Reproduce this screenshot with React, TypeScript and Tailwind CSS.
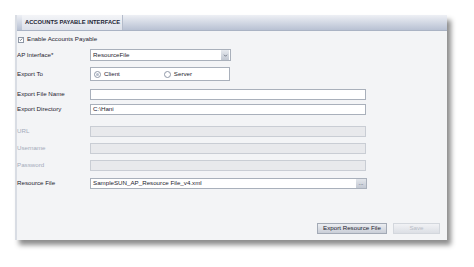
import React from "react";

const field = "h-[11px] border border-[#a9b0bb] bg-white";
const disabledField = "h-[11px] border border-[#c9cdd4] bg-[#e8e9ec]";

function Row({
	label,
	disabled,
	className,
	children,
}: {
	label: string;
	disabled?: boolean;
	className?: string;
	children: React.ReactNode;
}) {
	return (
		<div className={`flex items-center ${className ?? ""}`}>
			<span
				className={`w-[73px] shrink-0 whitespace-nowrap ${disabled ? "text-[#a3abba]" : "text-[#1e2330]"}`}
			>
				{label}
			</span>
			{children}
		</div>
	);
}

export default function App() {
	return (
		<div className="w-[474px] h-[267px] bg-white pt-[15px] pl-[15px] font-['Liberation_Sans',Arial,sans-serif] text-[6.2px] leading-none">
			<div className="w-[432px] h-[225px] bg-[#f3f4f6] border-l-2 border-[#d9dde4] shadow-[4px_5px_5px_rgba(0,0,0,0.45)] flex flex-col">
				{/* Header */}
				<div className="h-[16px] shrink-0 flex bg-gradient-to-b from-[#eef0f5] to-[#b8c1d3] border-b border-[#aab3c4]">
					<div className="ml-[5px] w-[101px] h-full flex items-center pl-[3px] bg-gradient-to-b from-[#f4f5f8] to-[#dde1ea] border-r border-[#b4bccb]">
						<span className="whitespace-nowrap font-bold text-[5.8px] text-[#1b2433]">
							ACCOUNTS PAYABLE INTERFACE
						</span>
					</div>
				</div>

				<div className="flex flex-col">
					{/* Enable */}
					<div className="mt-[4px] h-[9px] flex items-center">
						<div className="ml-[1px] w-[6px] h-[6px] border border-[#8e97a6] bg-white flex items-center justify-center">
							<svg viewBox="0 0 6 6" className="w-[5px] h-[5px]">
								<path d="M1 3 L2.4 4.4 L5 1.4" fill="none" stroke="#2c3546" strokeWidth="0.9" />
							</svg>
						</div>
						<span className="ml-[3px] text-[#1e2330]">Enable Accounts Payable</span>
					</div>

					<Row label="AP Interface*" className="mt-[5px]">
						<div className="w-[141px] h-[12px] border border-[#a9b0bb] bg-white flex items-center justify-between">
							<span className="pl-[2px] text-[#1e2330]">ResourceFile</span>
							<div className="w-[8px] h-[10px] bg-gradient-to-b from-[#e6e9ee] to-[#c2c8d2] flex items-center justify-center mr-[1px]">
								<svg viewBox="0 0 6 4" className="w-[5px] h-[3px]">
									<path d="M1 1 L3 3 L5 1" fill="none" stroke="#4a5262" strokeWidth="0.9" />
								</svg>
							</div>
						</div>
					</Row>

					<Row label="Export To" className="mt-[6px]">
						<div className="w-[140px] h-[14px] border border-[#a9b0bb] bg-white flex items-center">
							<div className="ml-[3px] w-[7px] h-[7px] rounded-full border border-[#8f98a8] bg-white flex items-center justify-center">
								<div className="w-[3px] h-[3px] rounded-full bg-[#b7bfcc]" />
							</div>
							<span className="ml-[3px] text-[#1e2330]">Client</span>
							<div className="ml-[44px] w-[7px] h-[7px] rounded-full border border-[#8f98a8] bg-white" />
							<span className="ml-[3px] text-[#1e2330]">Server</span>
						</div>
					</Row>

					<Row label="Export File Name" className="mt-[8px]">
						<div className={`w-[276px] ${field}`} />
					</Row>

					<Row label="Export Directory" className="mt-[4px]">
						<div className={`w-[276px] ${field} flex items-center pl-[2px] text-[#1e2330]`}>
							C:\Hani
						</div>
					</Row>

					<Row label="URL" disabled className="mt-[11px]">
						<div className={`w-[276px] ${disabledField}`} />
					</Row>

					<Row label="Username" disabled className="mt-[6px]">
						<div className={`w-[276px] ${disabledField}`} />
					</Row>

					<Row label="Password" disabled className="mt-[6px]">
						<div className={`w-[276px] ${disabledField}`} />
					</Row>

					<Row label="Resource File" className="mt-[7px]">
						<div className={`w-[277px] ${field} flex items-center justify-between`}>
							<span className="pl-[2px] text-[#1e2330]">SampleSUN_AP_Resource File_v4.xml</span>
							<div className="w-[10px] h-[9px] bg-gradient-to-b from-[#e3e6eb] to-[#c3c9d3] flex items-center justify-center">
								<span className="text-[#3b4352] text-[6px] leading-none -mt-[2px]">...</span>
							</div>
						</div>
					</Row>
				</div>

				{/* Buttons */}
				<div className="mt-[34px] flex justify-end pr-[7px] gap-[6px]">
					<div className="w-[70px] h-[11px] border border-[#a3aab6] bg-gradient-to-b from-[#eceef2] to-[#c9ced7] flex items-center justify-center text-[#1e2330]">
						Export Resource File
					</div>
					<div className="w-[47px] h-[11px] border border-[#d3d7dd] bg-gradient-to-b from-[#f1f2f5] to-[#dcdfe5] flex items-center justify-center text-[#b7bcc6]">
						Save
					</div>
				</div>
			</div>
		</div>
	);
}
